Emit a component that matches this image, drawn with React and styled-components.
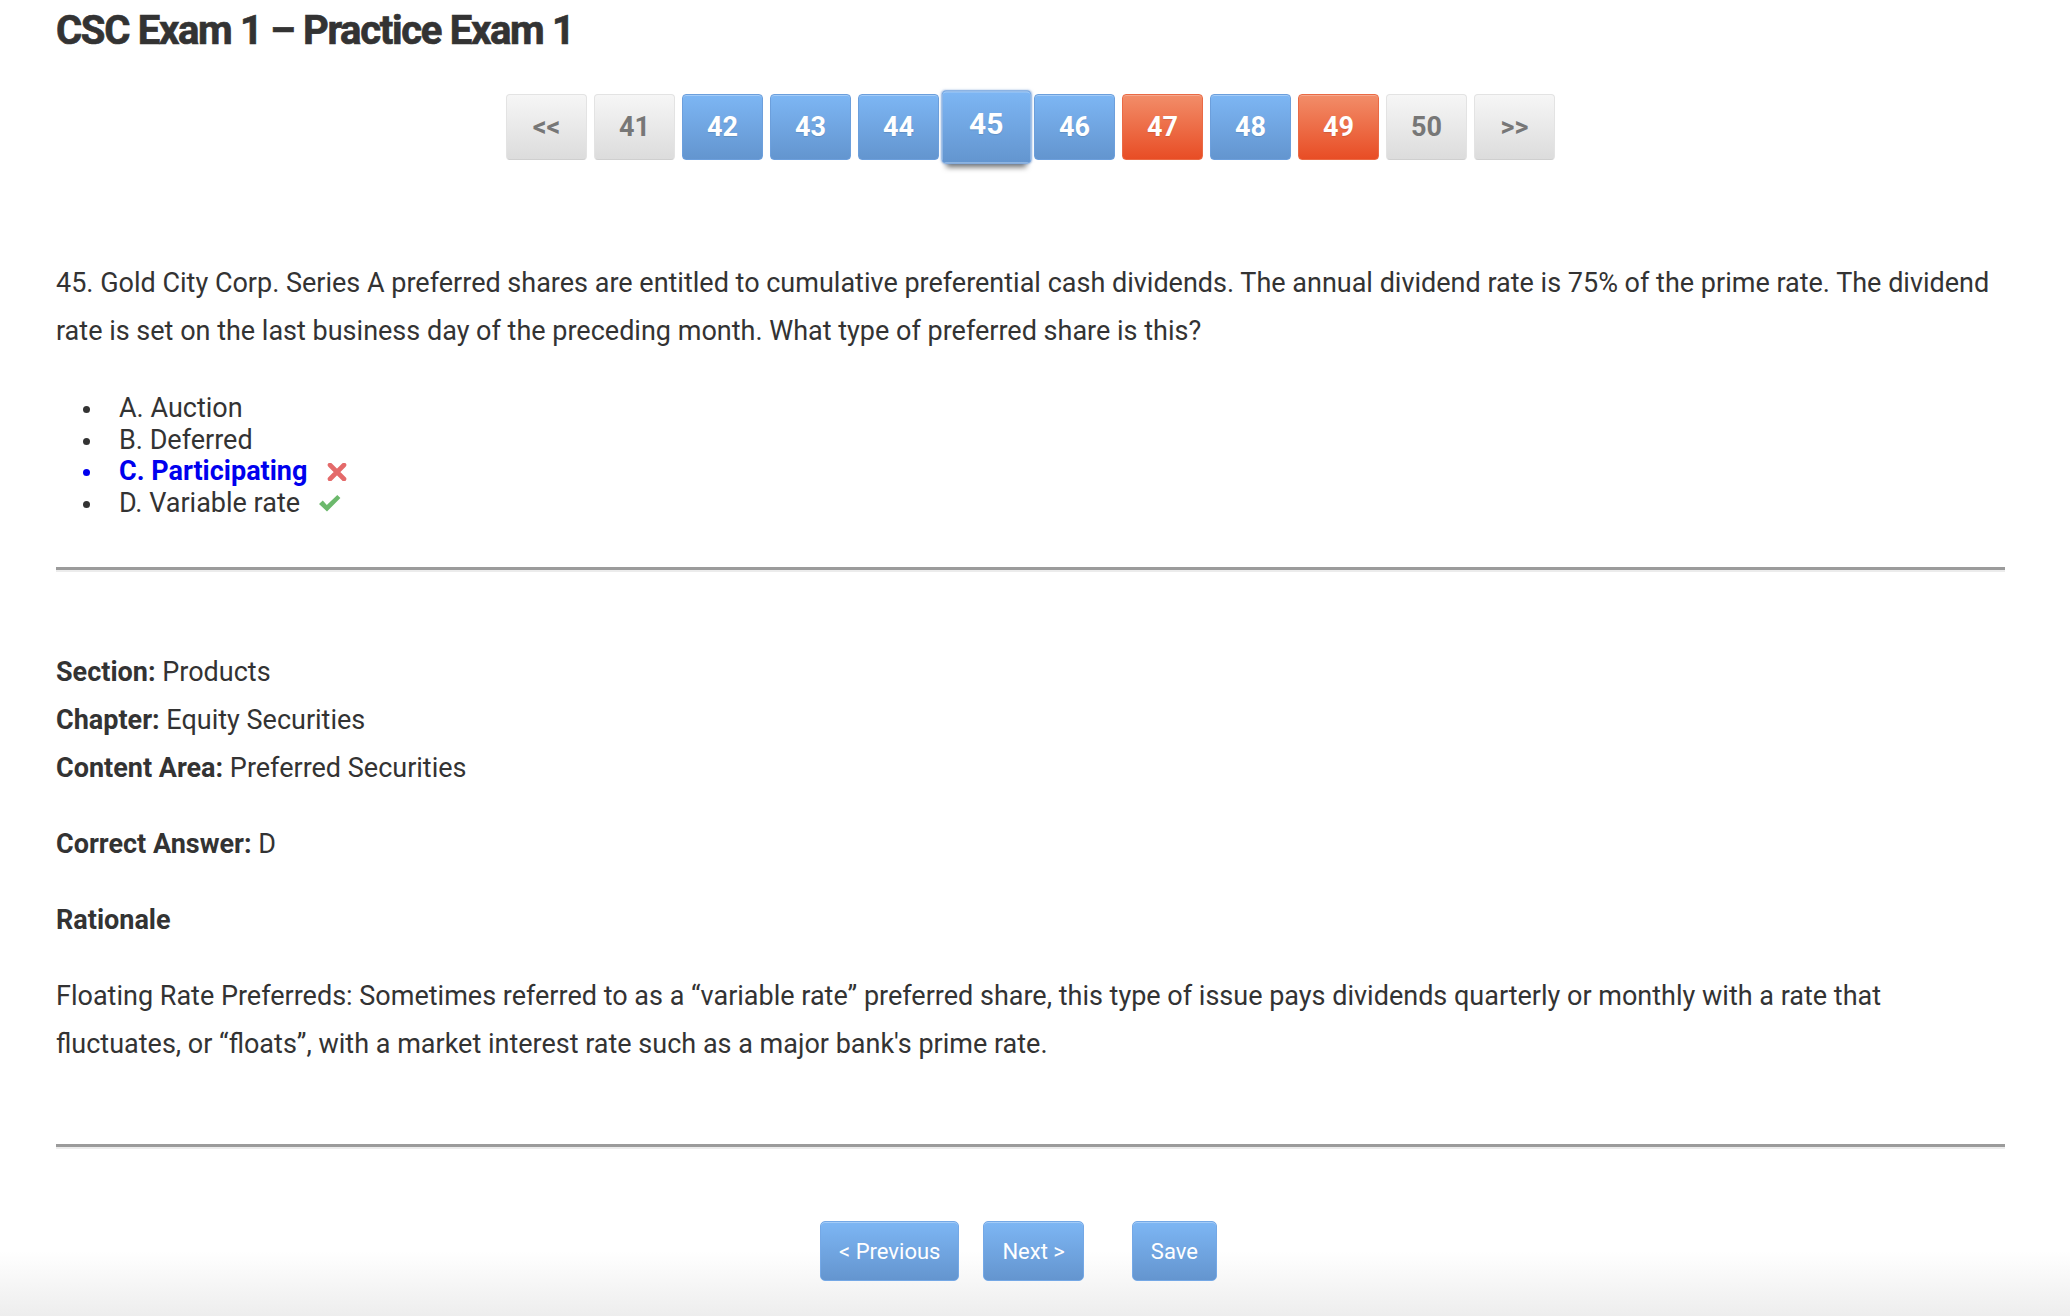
import React from "react";
import styled, { createGlobalStyle, css } from "styled-components";

const GlobalStyle = createGlobalStyle`
  html {
    min-height: 100%;
    background: linear-gradient(to bottom, #ffffff calc(100% - 70px), #ececec 100%);
  }
  body {
    margin: 0;
    font-family: Roboto, "Liberation Sans", Arial, sans-serif;
    color: #333333;
  }
`;

const Page = styled.div`
  padding: 7px 65px 40px 56px;
`;

const Title = styled.h1`
  margin: 0;
  font-size: 40px;
  font-weight: 700;
  line-height: normal;
  letter-spacing: -1.3px;
  -webkit-text-stroke: 0.7px #333333;
  color: #333333;
`;

const Pager = styled.nav`
  margin-top: 40px;
  display: flex;
  justify-content: center;
  gap: 7.5px;
`;

const variants = {
  gray: css`
    background: linear-gradient(to bottom, #f6f6f6 0%, #dcdcdc 100%);
    border: 1px solid #e3e3e3;
    border-bottom-color: #cfcfcf;
    color: #777777;
  `,
  blue: css`
    background: linear-gradient(to bottom, #7db6f4 0%, #6395cf 100%);
    border: 1px solid #6c9fdc;
    box-shadow: inset 0 1px 0 rgba(255, 255, 255, 0.3);
    color: #ffffff;
    text-shadow: 0 1px 1px rgba(0, 0, 0, 0.12);
  `,
  orange: css`
    background: linear-gradient(to bottom, #f28d69 0%, #e84d25 100%);
    border: 1px solid #ea6a45;
    box-shadow: inset 0 1px 0 rgba(255, 255, 255, 0.25);
    color: #ffffff;
    text-shadow: 0 1px 1px rgba(0, 0, 0, 0.12);
  `,
};

const PageButton = styled.button`
  box-sizing: border-box;
  width: 80.5px;
  height: 66px;
  border-radius: 4px;
  font-family: Roboto, "Liberation Sans", Arial, sans-serif;
  font-size: 27px;
  font-weight: 700;
  display: flex;
  align-items: center;
  justify-content: center;
  padding: 0;
  cursor: pointer;
  ${(p) => variants[p.$variant]}
  ${(p) =>
    p.$active &&
    css`
      transform: scale(1.11);
      box-shadow: inset 0 1px 0 rgba(255, 255, 255, 0.3),
        0 0 2px rgba(80, 130, 200, 0.6), 0 8px 5px -4px rgba(0, 0, 0, 0.55);
      padding-bottom: 6px;
    `}
`;

const Question = styled.p`
  margin: 99px 0 0;
  font-size: 27px;
  line-height: 48px;
`;

const Options = styled.ul`
  margin: 38px 0 0;
  padding: 0;
  list-style: none;
`;

const Option = styled.li`
  font-size: 27px;
  line-height: 31.5px;
  padding-left: 63px;
  color: ${(p) => (p.$chosen ? "#0000ee" : "#333333")};
  font-weight: ${(p) => (p.$chosen ? 700 : 400)};
  &::before {
    content: "";
    display: inline-block;
    width: 7px;
    height: 7px;
    border-radius: 50%;
    background: currentColor;
    margin-left: -36px;
    margin-right: 29px;
    vertical-align: middle;
  }
`;

const Mark = styled.svg`
  margin-left: ${(p) => p.$gap}px;
  vertical-align: ${(p) => p.$shift}px;
`;

const Rule = styled.hr`
  margin: ${(p) => p.$top}px 0 0;
  height: 0;
  border: 0;
  border-top: 3px solid #9b9b9b;
  border-bottom: 2px solid #ececec;
`;

const Meta = styled.div`
  margin-top: 76px;
  font-size: 27px;
  line-height: 48px;
`;

const MetaLine = styled.div``;

const Block = styled.p`
  margin: 28px 0 0;
  font-size: 27px;
  line-height: 48px;
  font-weight: ${(p) => (p.$bold ? 700 : 400)};
`;

const Label = styled.strong`
  font-weight: 700;
`;

const Actions = styled.div`
  margin-top: 72px;
  display: flex;
  justify-content: center;
  gap: 24px;
  padding-right: 24px;
`;

const ActionButton = styled.button`
  box-sizing: border-box;
  height: 60px;
  padding: 0 18px;
  margin-left: ${(p) => (p.$apart ? 24 : 0)}px;
  border-radius: 5px;
  border: 1px solid #74a8e6;
  background: linear-gradient(to bottom, #7db6f4 0%, #6495cf 100%);
  box-shadow: inset 0 1px 0 rgba(255, 255, 255, 0.3);
  color: #ffffff;
  font-family: Roboto, "Liberation Sans", Arial, sans-serif;
  font-size: 22px;
  font-weight: 400;
  cursor: pointer;
`;

const pages = [
  { label: "<<", v: "gray" },
  { label: "41", v: "gray" },
  { label: "42", v: "blue" },
  { label: "43", v: "blue" },
  { label: "44", v: "blue" },
  { label: "45", v: "blue", active: true },
  { label: "46", v: "blue" },
  { label: "47", v: "orange" },
  { label: "48", v: "blue" },
  { label: "49", v: "orange" },
  { label: "50", v: "gray" },
  { label: ">>", v: "gray" },
];

const WrongIcon = () => (
  <Mark $gap={20} $shift={-1} width="20" height="18" viewBox="0 0 20 18">
    <path
      d="M3 2 L17 16 M17 2 L3 16"
      stroke="#e46a6a"
      strokeWidth="4.6"
      strokeLinecap="round"
      fill="none"
    />
  </Mark>
);

const RightIcon = () => (
  <Mark $gap={18} $shift={-1} width="23" height="19" viewBox="0 0 23 19">
    <path
      d="M1 10 L4.8 6.6 L8.8 11 L19.3 1 L22.4 4 L9 17.5 Z"
      fill="#6cb96c"
    />
  </Mark>
);

export default function App() {
  return (
    <>
      <GlobalStyle />
      <Page>
        <Title>CSC Exam 1 – Practice Exam 1</Title>
        <Pager>
          {pages.map((p) => (
            <PageButton key={p.label} $variant={p.v} $active={p.active}>
              {p.label}
            </PageButton>
          ))}
        </Pager>

        <Question>
          45. Gold City Corp. Series A preferred shares are entitled to cumulative
          preferential cash dividends. The annual dividend rate is 75% of the prime
          rate. The dividend rate is set on the last business day of the preceding
          month. What type of preferred share is this?
        </Question>

        <Options>
          <Option>A. Auction</Option>
          <Option>B. Deferred</Option>
          <Option $chosen>
            C. Participating
            <WrongIcon />
          </Option>
          <Option>
            D. Variable rate
            <RightIcon />
          </Option>
        </Options>

        <Rule $top={48} />

        <Meta>
          <MetaLine>
            <Label>Section:</Label> Products
          </MetaLine>
          <MetaLine>
            <Label>Chapter:</Label> Equity Securities
          </MetaLine>
          <MetaLine>
            <Label>Content Area:</Label> Preferred Securities
          </MetaLine>
        </Meta>

        <Block>
          <Label>Correct Answer:</Label> D
        </Block>
        <Block $bold>Rationale</Block>
        <Block>
          Floating Rate Preferreds: Sometimes referred to as a “variable rate”
          preferred share, this type of issue pays dividends quarterly or monthly
          with a rate that fluctuates, or “floats”, with a market interest rate such
          as a major bank's prime rate.
        </Block>

        <Rule $top={76} />

        <Actions>
          <ActionButton>&lt; Previous</ActionButton>
          <ActionButton>Next &gt;</ActionButton>
          <ActionButton $apart>Save</ActionButton>
        </Actions>
      </Page>
    </>
  );
}
